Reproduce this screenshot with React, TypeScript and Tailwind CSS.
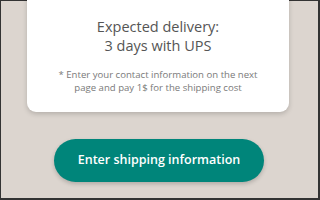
import React from "react";

export default function App() {
  return (
    <div
      className="w-[320px] h-[200px] overflow-hidden bg-[#333333] pl-px pt-px pr-[2px] pb-[2px]"
      style={{ fontFamily: "'Open Sans', 'Noto Sans', sans-serif" }}
    >
      <div className="w-full h-full bg-[#dcd5cf] flex flex-col items-center">
        <div className="ml-[-3px] mt-[-20px] w-[262px] h-[131px] bg-white rounded-[9px] shadow-[0_2px_5px_rgba(0,0,0,0.18)] flex flex-col items-center pt-[36px]">
          <div className="text-[14.5px] leading-[19px] text-[#555] text-center">
            <div>Expected delivery:</div>
            <div>3 days with UPS</div>
          </div>
          <div className="mt-[13px] text-[9.6px] leading-[13px] text-[#7a7a7a] text-center">
            <div>* Enter your contact information on the next</div>
            <div>page and pay 1$ for the shipping cost</div>
          </div>
        </div>
        <button className="mt-[27px] ml-[-1px] w-[210px] h-[43px] rounded-full bg-[#00857a] text-white font-semibold text-[12.5px] shadow-[0_2px_4px_rgba(0,0,0,0.2)]">
          Enter shipping information
        </button>
      </div>
    </div>
  );
}
